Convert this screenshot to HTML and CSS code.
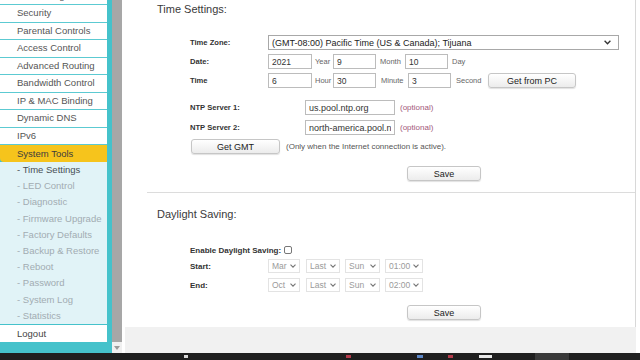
FILE: index.html
```html
<!DOCTYPE html>
<html lang="en">
<head>
<meta charset="utf-8">
<title>Time Settings</title>
<link rel="stylesheet" href="styles.css">
</head>
<body>
<div class="screen">
  <div class="app">
    <nav class="sidebar">
      <ul class="menu">
        <li class="item">Forwarding</li>
        <li class="item">Security</li>
        <li class="item">Parental Controls</li>
        <li class="item">Access Control</li>
        <li class="item">Advanced Routing</li>
        <li class="item">Bandwidth Control</li>
        <li class="item">IP &amp; MAC Binding</li>
        <li class="item">Dynamic DNS</li>
        <li class="item">IPv6</li>
        <li class="item active">System Tools</li>
        <li class="sub">
          <ul class="sub-list">
            <li class="sub-item current">- Time Settings</li>
            <li class="sub-item">- LED Control</li>
            <li class="sub-item">- Diagnostic</li>
            <li class="sub-item">- Firmware Upgrade</li>
            <li class="sub-item">- Factory Defaults</li>
            <li class="sub-item">- Backup &amp; Restore</li>
            <li class="sub-item">- Reboot</li>
            <li class="sub-item">- Password</li>
            <li class="sub-item">- System Log</li>
            <li class="sub-item">- Statistics</li>
          </ul>
        </li>
        <li class="item logout">Logout</li>
      </ul>
    </nav>
    <div class="scrollbar">
      <div class="thumb"></div>
      <div class="scroll-arrow">
        <svg width="6" height="4" viewBox="0 0 6 4"><path d="M0 0 L6 0 L3 4 Z" fill="#9a9a9a"/></svg>
      </div>
    </div>
    <main class="main">
      <div class="panel">
        <section class="section">
          <h2 class="title">Time Settings:</h2>
          <div class="form form-time">
            <div class="row">
              <span class="label">Time Zone:</span>
              <div class="select tz">
                <span>(GMT-08:00) Pacific Time (US &amp; Canada); Tijuana</span>
                <svg class="chev" width="7" height="5" viewBox="0 0 7 5"><path d="M0.6 0.8 L3.5 3.8 L6.4 0.8" fill="none" stroke="#333" stroke-width="1.3"/></svg>
              </div>
            </div>
            <div class="row row-date">
              <span class="label">Date:</span>
              <input class="inp" type="text" value="2021">
              <span class="unit u-year">Year</span>
              <input class="inp inp-s" type="text" value="9">
              <span class="unit u-month">Month</span>
              <input class="inp inp-s" type="text" value="10">
              <span class="unit u-day">Day</span>
            </div>
            <div class="row row-time">
              <span class="label">Time</span>
              <input class="inp" type="text" value="6">
              <span class="unit u-year">Hour</span>
              <input class="inp inp-s" type="text" value="30">
              <span class="unit u-minute">Minute</span>
              <input class="inp inp-s" type="text" value="3">
              <span class="unit u-second">Second</span>
              <button class="btn btn-pc" type="button">Get from PC</button>
            </div>
            <div class="row row-ntp1">
              <span class="label label-ntp">NTP Server 1:</span>
              <input class="inp inp-ntp" type="text" value="us.pool.ntp.org">
              <span class="optional">(optional)</span>
            </div>
            <div class="row row-ntp2">
              <span class="label label-ntp">NTP Server 2:</span>
              <input class="inp inp-ntp" type="text" value="north-america.pool.ntp.org">
              <span class="optional">(optional)</span>
            </div>
            <div class="row row-gmt">
              <button class="btn btn-gmt" type="button">Get GMT</button>
              <span class="hint">(Only when the Internet connection is active).</span>
            </div>
            <div class="row row-save">
              <button class="btn btn-save" type="button">Save</button>
            </div>
          </div>
        </section>
        <hr class="sep">
        <section class="section">
          <h2 class="title title-dst">Daylight Saving:</h2>
          <div class="form form-dst">
            <div class="row row-enable">
              <span class="dlabel">Enable Daylight Saving:</span>
              <span class="checkbox"></span>
            </div>
            <div class="row row-start">
              <span class="dlabel dlabel-w">Start:</span>
              <div class="select small s-mon"><span>Mar</span><svg class="chev" width="6" height="4" viewBox="0 0 6 4"><path d="M0.5 0.6 L3 3.2 L5.5 0.6" fill="none" stroke="#777" stroke-width="1.1"/></svg></div>
              <div class="select small s-week"><span>Last</span><svg class="chev" width="6" height="4" viewBox="0 0 6 4"><path d="M0.5 0.6 L3 3.2 L5.5 0.6" fill="none" stroke="#777" stroke-width="1.1"/></svg></div>
              <div class="select small s-day"><span>Sun</span><svg class="chev" width="6" height="4" viewBox="0 0 6 4"><path d="M0.5 0.6 L3 3.2 L5.5 0.6" fill="none" stroke="#777" stroke-width="1.1"/></svg></div>
              <div class="select small s-hour"><span>01:00</span><svg class="chev" width="6" height="4" viewBox="0 0 6 4"><path d="M0.5 0.6 L3 3.2 L5.5 0.6" fill="none" stroke="#777" stroke-width="1.1"/></svg></div>
            </div>
            <div class="row row-end">
              <span class="dlabel dlabel-w">End:</span>
              <div class="select small s-mon"><span>Oct</span><svg class="chev" width="6" height="4" viewBox="0 0 6 4"><path d="M0.5 0.6 L3 3.2 L5.5 0.6" fill="none" stroke="#777" stroke-width="1.1"/></svg></div>
              <div class="select small s-week"><span>Last</span><svg class="chev" width="6" height="4" viewBox="0 0 6 4"><path d="M0.5 0.6 L3 3.2 L5.5 0.6" fill="none" stroke="#777" stroke-width="1.1"/></svg></div>
              <div class="select small s-day"><span>Sun</span><svg class="chev" width="6" height="4" viewBox="0 0 6 4"><path d="M0.5 0.6 L3 3.2 L5.5 0.6" fill="none" stroke="#777" stroke-width="1.1"/></svg></div>
              <div class="select small s-hour"><span>02:00</span><svg class="chev" width="6" height="4" viewBox="0 0 6 4"><path d="M0.5 0.6 L3 3.2 L5.5 0.6" fill="none" stroke="#777" stroke-width="1.1"/></svg></div>
            </div>
            <div class="row row-save2">
              <button class="btn btn-save" type="button">Save</button>
            </div>
          </div>
        </section>
      </div>
      <div class="band"></div>
    </main>
  </div>
  <div class="taskbar">
    <span class="tb tb-1"></span>
    <span class="tb tb-2"></span>
    <span class="tb tb-3"></span>
    <span class="tb tb-4"></span>
    <span class="tb tb-5"></span>
    <span class="tb tb-6"></span>
  </div>
</div>
</body>
</html>
```

FILE: styles.css
```css
html, body {
  margin: 0;
  padding: 0;
  width: 640px;
  height: 360px;
  overflow: hidden;
  background: #fff;
  font-family: "Liberation Sans", Arial, sans-serif;
}

.screen {
  display: flex;
  flex-direction: column;
  height: 360px;
}

.app {
  display: flex;
  height: 353px;
  overflow: hidden;
}

/* ---------- sidebar ---------- */
.sidebar {
  width: 107px;
  flex: none;
  background: #45c2cb;
  border-right: 5px solid #45c2cb;
  overflow: hidden;
}

.menu {
  list-style: none;
  margin: -12.5px 0 0;
  padding: 0;
}

.item {
  display: block;
  box-sizing: border-box;
  height: 17.5px;
  line-height: 16.5px;
  padding-left: 17px;
  border-bottom: 1px solid #5ccad2;
  background: #fff;
  color: #555;
  font-size: 9.5px;
  white-space: nowrap;
}

.item.active {
  height: 17px;
  line-height: 17px;
  border-bottom: 0;
  background: #f6c41c;
  color: #3c3c3c;
  border-radius: 0 0 0 4px;
}

.sub {
  display: block;
  background: #e1f3f7;
}

.sub-list {
  list-style: none;
  margin: 0;
  padding: 0;
}

.sub-item {
  height: 16.2px;
  line-height: 16.2px;
  padding-left: 17px;
  font-size: 9.5px;
  color: #a2acb2;
  white-space: nowrap;
}

.sub-item.current {
  color: #474f55;
}

.item.logout {
  margin-top: 1px;
  height: 17px;
  line-height: 17px;
  border-bottom: 0;
  color: #444;
}

/* ---------- scrollbar ---------- */
.scrollbar {
  width: 10px;
  flex: none;
  display: flex;
  flex-direction: column;
  background: #f0f0f0;
}

.thumb {
  flex: 1;
  background: #a7a7a7;
}

.scroll-arrow {
  height: 11px;
  display: flex;
  align-items: center;
  justify-content: center;
}

/* ---------- main ---------- */
.main {
  flex: 1;
  display: flex;
  flex-direction: column;
  padding-right: 4px;
  background: #fff;
}

.panel {
  flex: 1;
  border-right: 1px solid #d8d8d8;
}

.band {
  height: 26px;
  margin-left: 3px;
  background: #f1f1f1;
}

.title {
  margin: 3px 0 0 35px;
  font-size: 11px;
  line-height: 13px;
  font-weight: normal;
  color: #3a3a3a;
}

.title-dst {
  margin-top: 15px;
}

.form {
  margin-left: 68px;
  display: flex;
  flex-direction: column;
}

.form-time {
  margin-top: 19px;
}

.form-dst {
  margin-top: 23px;
}

.row {
  display: flex;
  align-items: center;
  height: 15px;
}

.row-date { margin-top: 4px; }
.row-time { margin-top: 4px; }
.row-ntp1 { margin-top: 12px; }
.row-ntp2 { margin-top: 5px; }
.row-gmt { margin-top: 4px; }
.row-save { margin-top: 12px; }

.row-enable { margin-top: 0; height: 12px; }
.row-start { margin-top: 3px; height: 14px; }
.row-end { margin-top: 5px; height: 14px; }
.row-save2 { margin-top: 13px; }

.label {
  width: 78px;
  flex: none;
  font-weight: bold;
  font-size: 7.6px;
  color: #333;
}

.label-ntp {
  width: 115px;
}

.select {
  box-sizing: border-box;
  display: flex;
  align-items: center;
  justify-content: space-between;
  background: #fff;
  white-space: nowrap;
}

.select.tz {
  width: 351px;
  height: 15px;
  padding: 0 7px 0 3px;
  border: 1px solid #a8a8a8;
  font-size: 9px;
  color: #222;
}

.inp {
  box-sizing: border-box;
  width: 44px;
  height: 15px;
  margin: 0;
  padding: 0 3px;
  border: 1px solid #bcbcbc;
  border-radius: 0;
  font-family: "Liberation Sans", Arial, sans-serif;
  font-size: 8.5px;
  color: #333;
  outline: none;
}

.inp-s {
  width: 43px;
}

.inp-ntp {
  width: 90px;
  font-size: 9px;
}

.unit {
  box-sizing: border-box;
  flex: none;
  font-size: 7.5px;
  color: #666;
  padding-left: 3px;
}

.u-year { width: 21px; }
.u-month { width: 29px; padding-left: 4px; }
.u-day { padding-left: 4px; }
.u-minute { width: 32px; padding-left: 5px; }
.u-second { width: 37px; padding-left: 5px; }

.optional {
  margin-left: 5px;
  font-size: 8px;
  color: #a3587b;
}

.btn {
  box-sizing: border-box;
  height: 15px;
  margin: 0;
  padding: 0;
  border: 1px solid #c6c6c6;
  border-radius: 3px;
  background: linear-gradient(#ffffff, #ececec);
  box-shadow: 0 1px 1px rgba(0, 0, 0, 0.12);
  font-family: "Liberation Sans", Arial, sans-serif;
  font-size: 9px;
  color: #222;
}

.btn-pc { width: 88px; }
.btn-gmt { width: 89px; margin-left: 1px; }
.btn-save { width: 74px; margin-left: 217px; }

.hint {
  margin-left: 6px;
  font-size: 8px;
  color: #555;
  white-space: nowrap;
}

.sep {
  margin: 11px 0 0 25px;
  height: 0;
  border: 0;
  border-top: 1px solid #dcdcdc;
}

.dlabel {
  font-weight: bold;
  font-size: 8px;
  color: #333;
  white-space: nowrap;
}

.dlabel-w {
  width: 78px;
  flex: none;
}

.checkbox {
  box-sizing: border-box;
  width: 8px;
  height: 8px;
  margin-left: 3px;
  border: 1px solid #777;
  border-radius: 2px;
  background: #fff;
}

.select.small {
  height: 14px;
  padding: 0 3px;
  border: 1px solid #e3e3e3;
  font-size: 8.5px;
  color: #9a9a9a;
}

.s-mon { width: 32px; }
.s-week { width: 34px; margin-left: 6px; }
.s-day { width: 35px; margin-left: 5px; }
.s-hour { width: 38px; margin-left: 5px; }

/* ---------- taskbar ---------- */
.taskbar {
  height: 7px;
  display: flex;
  align-items: flex-start;
  background: #1f1f1f;
}

.tb {
  height: 3px;
  margin-top: 2px;
}

.tb-1 { width: 4px; margin-left: 184px; background: #d8d8d8; }
.tb-2 { width: 5px; margin-left: 158px; background: #b33a4a; }
.tb-3 { width: 6px; margin-left: 66px; background: #5b86c6; }
.tb-4 { width: 5px; margin-left: 25px; background: #b33a4a; }
.tb-5 { width: 13px; margin-left: 26px; background: #e8e8e8; }
.tb-6 { width: 34px; height: 7px; margin-top: 0; margin-left: 43px; background: #3a3a3a; }
```
